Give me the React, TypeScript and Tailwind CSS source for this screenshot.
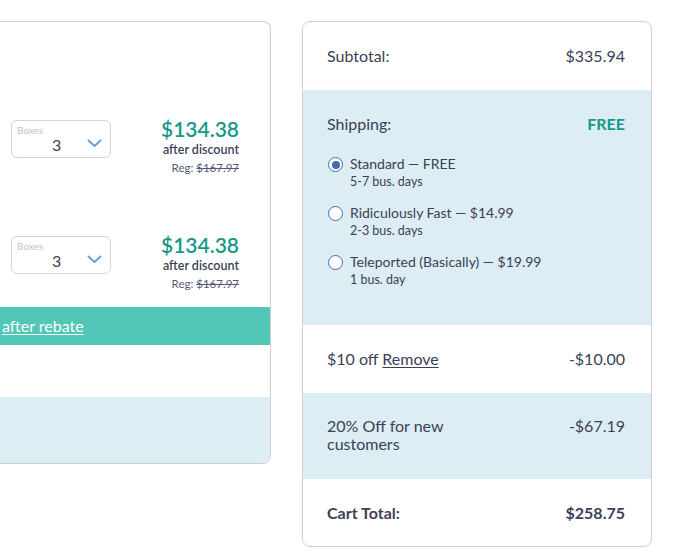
const font = { fontFamily: 'Lato, "Noto Sans", sans-serif' };

function BoxSelect() {
  return (
    <div className="relative w-[100px] h-[38px] rounded-md border border-[#d4d4d4] bg-white">
      <span className="absolute left-[5px] top-[4px] text-[10px] leading-none text-[#c2c2c2]">Boxes</span>
      <span className="absolute left-[40px] top-[14px] text-[16px] leading-5 text-[#3b3f57]">3</span>
      <svg className="absolute left-[75px] top-[18px]" width="15" height="9" viewBox="0 0 15 9" fill="none">
        <polyline points="1.5,1.5 7.5,7 13.5,1.5" stroke="#6aa0d8" strokeWidth="2" strokeLinecap="round" strokeLinejoin="round" />
      </svg>
    </div>
  );
}

function ItemRow() {
  return (
    <div className="h-[116px] flex items-start justify-between pl-[11px] pr-[31px] pt-[45px]">
      <BoxSelect />
      <div className="flex flex-col items-end -mt-[4px]">
        <span className="text-[21px] leading-[26px] font-semibold text-[#16998a]">$134.38</span>
        <span className="text-[12.5px] leading-[16px] font-semibold text-[#3b3f57]">after discount</span>
        <span className="text-[11.5px] leading-[20px] text-[#555a73]">
          Reg: <span className="line-through">$167.97</span>
        </span>
      </div>
    </div>
  );
}

function Radio({ checked }: { checked?: boolean }) {
  return (
    <span className="mt-[2px] w-[15px] h-[15px] rounded-full border border-[#3f6db3] bg-white flex items-center justify-center shrink-0">
      {checked && <span className="w-[8px] h-[8px] rounded-full bg-[#3f6db3]" />}
    </span>
  );
}

function ShipOption({ label, sub, checked }: { label: string; sub: string; checked?: boolean }) {
  return (
    <div className="flex items-start gap-[7px] h-[49px]">
      <Radio checked={checked} />
      <div className="flex flex-col">
        <span className="text-[14px] leading-[18px] text-[#3b3f57]">{label}</span>
        <span className="text-[12.5px] leading-[18px] text-[#3b3f57]">{sub}</span>
      </div>
    </div>
  );
}

export default function App() {
  return (
    <div className="w-[693px] h-[554px] bg-white flex items-start pt-[21px] gap-[31px]" style={font}>
      <div className="w-[271px] h-[443px] flex flex-col border-y border-r border-[#d0d0d0] rounded-r-lg overflow-hidden">
        <div className="h-[53px]" />
        <ItemRow />
        <ItemRow />
        <div className="h-[38px] bg-[#52c6b7] flex items-center pl-[2px]">
          <span className="text-white text-[16px] underline underline-offset-2">after rebate</span>
        </div>
        <div className="h-[52px]" />
        <div className="flex-1 bg-[#ddedf4]" />
      </div>

      <div className="w-[350px] h-[526px] flex flex-col border border-[#d0d0d0] rounded-lg overflow-hidden text-[#3b3f57]">
        <div className="h-[68px] flex items-center justify-between pl-6 pr-[26px] text-[16px]">
          <span>Subtotal:</span>
          <span>$335.94</span>
        </div>
        <div className="h-[235px] bg-[#ddedf4] pl-6 pr-[26px] pt-[24px]">
          <div className="flex items-center justify-between text-[16px] leading-[20px]">
            <span>Shipping:</span>
            <span className="font-bold text-[#16998a]">FREE</span>
          </div>
          <div className="mt-[21px] pl-[1px]">
            <ShipOption label="Standard — FREE" sub="5-7 bus. days" checked />
            <ShipOption label="Ridiculously Fast — $14.99" sub="2-3 bus. days" />
            <ShipOption label="Teleported (Basically) — $19.99" sub="1 bus. day" />
          </div>
        </div>
        <div className="h-[68px] flex items-center justify-between pl-6 pr-[26px] text-[16px]">
          <span>
            $10 off <span className="underline underline-offset-2">Remove</span>
          </span>
          <span>-$10.00</span>
        </div>
        <div className="h-[86px] bg-[#ddedf4] flex items-start justify-between pl-6 pr-[26px] pt-[24px] text-[16px] leading-[18px]">
          <span className="w-[140px]">20% Off for new customers</span>
          <span>-$67.19</span>
        </div>
        <div className="flex-1 flex items-center justify-between pl-6 pr-[26px] text-[16px] font-bold">
          <span>Cart Total:</span>
          <span>$258.75</span>
        </div>
      </div>
    </div>
  );
}
